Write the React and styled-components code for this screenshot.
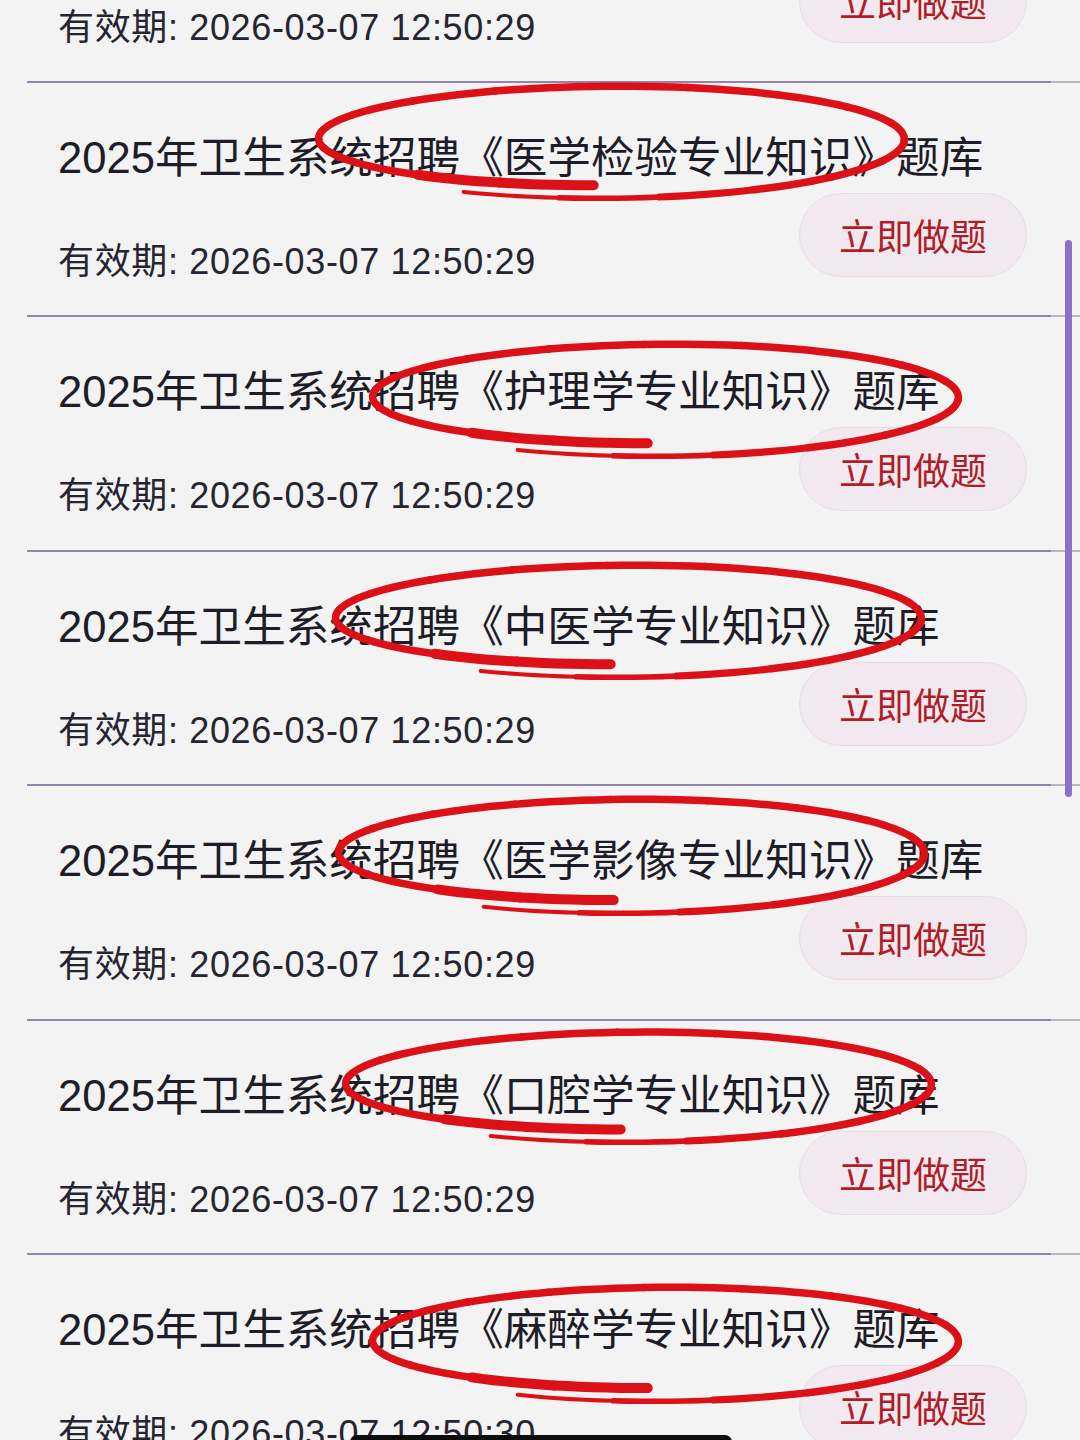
import styled, { createGlobalStyle } from "styled-components";

const GlobalStyle = createGlobalStyle`
  html, body {
    margin: 0;
    padding: 0;
    background: #f3f3f4;
  }
  body {
    font-family: "Liberation Sans", "Noto Sans CJK SC", sans-serif;
  }
`;

const Page = styled.div`
  position: relative;
  width: 1080px;
  height: 1440px;
  overflow: hidden;
  background: #f3f3f4;
`;

const List = styled.div`
  margin-top: -153.4px;
`;

const Row = styled.div`
  position: relative;
  box-sizing: border-box;
  height: 234.4px;
  padding: 0 53px 0 58px;
  border-top: 2px solid;
  border-image: linear-gradient(
      to right,
      transparent 28px,
      #9384ad 28px,
      #9384ad 1050px,
      #b9b8bd 1050px
    )
    1;
`;

const Title = styled.div`
  margin-top: 49px;
  font-size: 43.6px;
  line-height: 52px;
  color: #1d1c27;
  white-space: nowrap;
`;

const Bottom = styled.div`
  display: flex;
  justify-content: space-between;
  align-items: flex-end;
  margin-top: 9px;
`;

const Expiry = styled.div`
  font-size: 36px;
  line-height: 44px;
  margin-bottom: -7px;
  color: #26252f;
  letter-spacing: 0.65px;
  white-space: nowrap;
`;

const StartButton = styled.button`
  width: 228px;
  height: 84px;
  border-radius: 42px;
  border: 1px solid #e9dae6;
  background: #f1e9ef;
  color: #b01d27;
  font-family: "Noto Sans CJK SC", sans-serif;
  font-size: 37px;
  padding: 0;
  cursor: pointer;
`;

const Circle = styled.svg`
  position: absolute;
  left: 0;
  top: -2px;
  pointer-events: none;
  overflow: visible;
`;

const ScrollThumb = styled.div`
  position: absolute;
  right: 8px;
  top: 240px;
  width: 7px;
  height: 557px;
  border-radius: 4px;
  background: #8d6fcd;
`;

const HomeBar = styled.div`
  position: absolute;
  left: 350px;
  top: 1435px;
  width: 382px;
  height: 14px;
  border-radius: 7px;
  background: #0d0d0d;
`;

// hand drawn loop: starts inside near the bottom, goes round once and a bit
function loopSegments({ cx, cy, rx, ry }) {
  const n = 140;
  const a0 = Math.PI / 2 + 0.05;
  const a1 = a0 + Math.PI * 2 + 0.45;
  const pts = [];
  for (let i = 0; i <= n; i++) {
    const t = i / n;
    const a = a0 + (a1 - a0) * t;
    const fy = 0.8 + 0.24 * t;
    const fx = 0.96 + 0.05 * t;
    pts.push([cx + rx * fx * Math.cos(a), cy + ry * fy * Math.sin(a)]);
  }
  const segs = [];
  const step = 7;
  for (let i = 0; i < n; i += step) {
    const chunk = pts.slice(i, Math.min(i + step + 1, n + 1));
    const t = i / n;
    let w = 7.5;
    if (t < 0.06) w = 10;
    else if (t > 0.84) w = 7.5 - ((t - 0.84) / 0.16) * 5;
    segs.push({
      d: "M" + chunk.map((p) => p[0].toFixed(1) + " " + p[1].toFixed(1)).join(" L"),
      w,
    });
  }
  return segs;
}

const items = [
  { name: "临床医学专业知识", date: "2026-03-07 12:50:29" },
  {
    name: "医学检验专业知识",
    date: "2026-03-07 12:50:29",
    loop: { cx: 608, cy: 58, rx: 298, ry: 58 },
  },
  {
    name: "护理学专业知识",
    date: "2026-03-07 12:50:29",
    loop: { cx: 662, cy: 82, rx: 298, ry: 58 },
  },
  {
    name: "中医学专业知识",
    date: "2026-03-07 12:50:29",
    loop: { cx: 625, cy: 68, rx: 298, ry: 58 },
  },
  {
    name: "医学影像专业知识",
    date: "2026-03-07 12:50:29",
    loop: { cx: 628, cy: 69, rx: 298, ry: 59 },
  },
  {
    name: "口腔学专业知识",
    date: "2026-03-07 12:50:29",
    loop: { cx: 635, cy: 65, rx: 298, ry: 57 },
  },
  {
    name: "麻醉学专业知识",
    date: "2026-03-07 12:50:30",
    loop: { cx: 662, cy: 88, rx: 298, ry: 59 },
  },
];

function BankRow({ item }) {
  return (
    <Row>
      <Title>2025年卫生系统招聘《{item.name}》题库</Title>
      <Bottom>
        <Expiry>有效期: {item.date}</Expiry>
        <StartButton>立即做题</StartButton>
      </Bottom>
      {item.loop && (
        <Circle width="1080" height="240" viewBox="0 0 1080 240">
          {loopSegments(item.loop).map((s, i) => (
            <path
              key={i}
              d={s.d}
              fill="none"
              stroke="#dc1117"
              strokeWidth={s.w}
              strokeLinecap="round"
              strokeLinejoin="round"
            />
          ))}
        </Circle>
      )}
    </Row>
  );
}

export default function App() {
  return (
    <Page>
      <GlobalStyle />
      <List>
        {items.map((item, i) => (
          <BankRow key={i} item={item} />
        ))}
      </List>
      <ScrollThumb />
      <HomeBar />
    </Page>
  );
}
